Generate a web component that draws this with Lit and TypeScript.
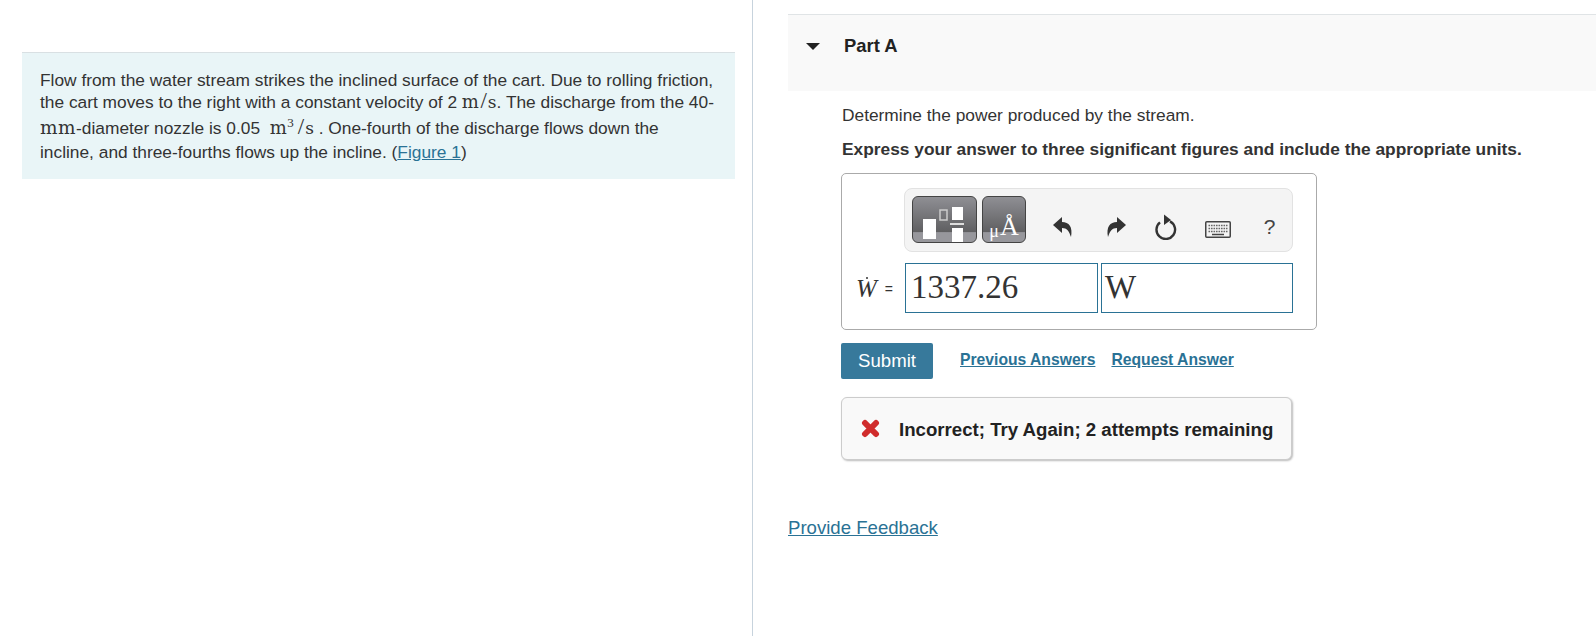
import { LitElement, html, css, svg } from "lit";
import { customElement } from "lit/decorators.js";

@customElement("app-root")
export class AppRoot extends LitElement {
  static styles = css`
    :host { display: flex; width: 1596px; height: 636px; overflow: hidden; background: #fff; color: #333;
      font-family: "Liberation Sans", Arial, sans-serif; font-size: 17.33px; }
    * { box-sizing: border-box; }
    a { color: #2a7295; text-decoration: underline; }
    .left { width: 753px; height: 636px; flex: none; border-right: 1px solid #c7d3dd; padding: 52px 17px 0 22px; }
    .intro { height: 127px; background: #e9f5f7; border-top: 1px solid #d9e0e3; padding: 16px 17px 0 18px; line-height: 22px; }
    .intro .l { display: block; white-space: nowrap; height: 22px; }
    .intro .l3 { margin-top: 2px; height: 26px; line-height: 26px; }
    .m { font-family: "DejaVu Serif", serif; font-size: 17px; }
    .mm { font-size: 18.5px; letter-spacing: 0.5px; }
    .m .u { font-size: 18px; letter-spacing: 0.5px; }
    .m sup { font-size: 13px; line-height: 0; vertical-align: 7px; font-family: "Liberation Serif", serif; margin-right: 3px; }
    .s { font-size: 23px; font-family: "Liberation Serif", serif; line-height: 0; padding: 0 1px; display: inline-block; }
    .right { flex: 1; padding: 14px 0 0 35px; min-width: 0; }
    .head { height: 77px; background: #f9f9f9; border-top: 1px solid #e0e4e6; display: flex; padding-top: 21px; color: #222; font-weight: bold; font-size: 18.4px; line-height: 20px; }
    .tri { width: 0; height: 0; margin: 7px 24px 0 18px; border-left: 7.5px solid transparent; border-right: 7.5px solid transparent; border-top: 7px solid #222; }
    .body { padding: 14px 0 0 53px; width: 1000px; }
    .body p { margin: 0 0 0 1px; line-height: 20px; white-space: nowrap; }
    .body p.b { font-weight: bold; margin-top: 14px; }
    .answer { margin-top: 14px; width: 476px; height: 157px; border: 1px solid #aaa; border-radius: 5px; padding: 14px 23px 0 62px; }
    .tools { height: 64px; background: #f4f4f4; border: 1px solid #e2e2e2; border-radius: 8px; display: flex; padding: 0 0 0 7px; }
    .tpl { flex: none; height: 47px; margin-top: 7px; border-radius: 6px; border: 1px solid #444; background: linear-gradient(#8f8f94 0, #5f5f61 78%, #97979c 79%); margin-right: 5px; }
    .tpl svg { display: block; }
    .t1 { width: 65px; }
    .t2 { width: 44px; color: #fff; font-family: "Liberation Serif", serif; display: flex; align-items: flex-end; justify-content: center; overflow: hidden; line-height: 1; padding-bottom: 2px; }
    .t2 .mu { font-size: 18px; margin-right: 1px; }
    .t2 .ang { font-size: 26px; }
    .icons { flex: none; display: flex; align-items: center; height: 62px; margin-left: 6px; padding-top: 14px; }
    .ic { display: flex; justify-content: center; width: 53px; }
    .ic.u { width: 52px; }
    .ic.r { width: 48px; }
    .ic.k { width: 55px; padding-top: 4px; }
    .ic.q { width: 49px; font-size: 21px; color: #444; }
    .row { display: flex; align-items: center; margin-top: 11px; margin-left: -44px; }
    .lbl { width: 45px; font-size: 14px; display: flex; align-items: center; justify-content: flex-end; padding: 2px 12px 0 0; gap: 8px; white-space: nowrap; }
    .lbl i { font-family: "Liberation Serif", serif; font-size: 25px; position: relative; }
    .lbl i::before { content: ""; position: absolute; left: 10px; top: 2px; width: 2px; height: 2px; background: #333; border-radius: 50%; }
    .inp { flex: none; width: 193px; height: 50px; border: 1px solid #2a7295; font-family: "Liberation Serif", serif; font-size: 33px; line-height: 47px; padding-left: 5px; color: #333; }
    .inp + .inp { margin-left: 3px; width: 192px; padding-left: 3px; }
    .actions { display: flex; align-items: center; margin-top: 13px; }
    .submit { width: 92px; height: 36px; background: #37799b; color: #fff; border-radius: 2px; display: flex; align-items: center; justify-content: center; font-size: 18.6px; }
    .actions a { font-weight: bold; font-size: 15.7px; margin-left: 16px; position: relative; top: -1px; }
    .actions a:first-of-type { margin-left: 27px; }
    .fb { margin-top: 18px; width: 451px; height: 63px; background: #f9f9f9; border: 1px solid #ccc; border-radius: 6px; box-shadow: 1px 1px 2px #bbb; display: flex; align-items: center; padding: 3px 0 0 19px; gap: 19px; font-weight: bold; font-size: 18.65px; color: #222; white-space: nowrap; }
    .fb svg { margin-top: -3px; }
    .provide { display: block; margin-top: 57px; font-size: 18.6px; line-height: 22px; width: fit-content; }
  `;

  render() {
    return html`
      <div class="left">
        <div class="intro">
          <span class="l">Flow from the water stream strikes the inclined surface of the cart. Due to rolling friction,</span>
          <span class="l">the cart moves to the right with a constant velocity of 2 <span class="m"><span class="u">m</span><span class="s">/</span>s</span>. The discharge from the 40-</span>
          <span class="l l3"><span class="m mm">mm</span>-diameter nozzle is 0.05 &nbsp;<span class="m"><span class="u">m</span><sup>3</sup><span class="s">/</span>s</span> . One-fourth of the discharge flows down the</span>
          <span class="l">incline, and three-fourths flows up the incline. (<a href="#">Figure 1</a>)</span>
        </div>
      </div>
      <div class="right">
        <div class="head"><span class="tri"></span><span>Part A</span></div>
        <div class="body">
          <p>Determine the power produced by the stream.</p>
          <p class="b">Express your answer to three significant figures and include the appropriate units.</p>
          <div class="answer">
            <div class="tools">
              <div class="tpl t1">
                <svg width="63" height="45" viewBox="0 0 63 45">
                  <rect x="10" y="22" width="13" height="20" fill="#fff"/>
                  <rect x="27" y="13" width="7" height="10" fill="none" stroke="#ccc" stroke-width="1.5"/>
                  <rect x="39" y="10" width="11" height="13" fill="#fff"/>
                  <rect x="37" y="26" width="14" height="2" fill="#ddd"/>
                  <rect x="39" y="31" width="11" height="14" fill="#fff"/>
                </svg>
              </div>
              <div class="tpl t2"><span class="mu">μ</span><span class="ang">Å</span></div>
              <div class="icons">
                <span class="ic u">${svg`<svg width="20" height="22" viewBox="0 0 20 22"><path d="M0 9 L9 1 V6 C16 6 20 11 18 21 C16 15 14 12 9 12 V17 Z" fill="#333"/></svg>`}</span>
                <span class="ic">${svg`<svg width="20" height="22" viewBox="0 0 20 22"><path d="M20 9 L11 1 V6 C4 6 0 11 2 21 C4 15 6 12 11 12 V17 Z" fill="#333"/></svg>`}</span>
                <span class="ic r">${svg`<svg width="22" height="26" viewBox="0 0 22 26"><path d="M15 7.4 A9.3 9.3 0 1 1 5 8.4" fill="none" stroke="#333" stroke-width="2.4"/><path d="M9 0.5 L16 6 L9 11 Z" fill="#333"/></svg>`}</span>
                <span class="ic k">${svg`<svg width="26" height="17" viewBox="0 0 26 17"><rect x="0.75" y="0.75" width="24.5" height="15.5" rx="1" fill="#f4f4f4" stroke="#444" stroke-width="1.5"/><path d="M3.5 4.5H22.5M3.5 7.5H22.5M3.5 10.5H22.5" stroke="#666" stroke-width="1.6" stroke-dasharray="1.6 .9"/><path d="M7 13.5H19" stroke="#444" stroke-width="1.5"/></svg>`}</span>
                <span class="ic q">?</span>
              </div>
            </div>
            <div class="row">
              <span class="lbl"><i>W</i><span>=</span></span>
              <div class="inp">1337.26</div>
              <div class="inp">W</div>
            </div>
          </div>
          <div class="actions">
            <div class="submit">Submit</div>
            <a href="#">Previous Answers</a>
            <a href="#">Request Answer</a>
          </div>
          <div class="fb">
            <svg width="19" height="19" viewBox="0 0 19 19"><path d="M4 4 L15 15 M15 4 L4 15" stroke="#d02c2c" stroke-width="6" stroke-linecap="round"/></svg>
            <span>Incorrect; Try Again; 2 attempts remaining</span>
          </div>
        </div>
        <a class="provide" href="#">Provide Feedback</a>
      </div>
    `;
  }
}
